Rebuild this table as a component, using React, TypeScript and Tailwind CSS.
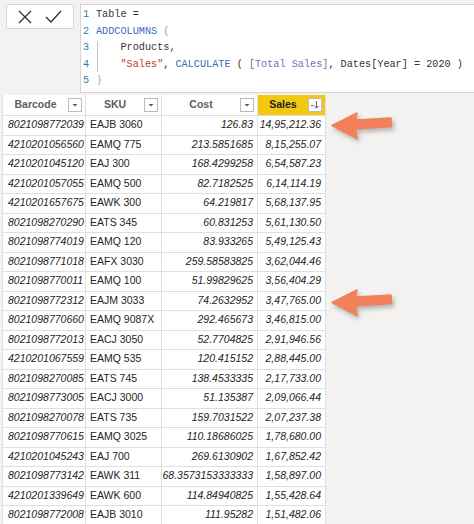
import React from "react";

const ROWS: [string, string, string, string][] = [
  ["8021098772039", "EAJB 3060", "126.83", "14,95,212.36"],
  ["4210201056560", "EAMQ 775", "213.5851685", "8,15,255.07"],
  ["4210201045120", "EAJ 300", "168.4299258", "6,54,587.23"],
  ["4210201057055", "EAMQ 500", "82.7182525", "6,14,114.19"],
  ["4210201657675", "EAWK 300", "64.219817", "5,68,137.95"],
  ["8021098270290", "EATS 345", "60.831253", "5,61,130.50"],
  ["8021098774019", "EAMQ 120", "83.933265", "5,49,125.43"],
  ["8021098771018", "EAFX 3030", "259.58583825", "3,62,044.46"],
  ["8021098770011", "EAMQ 100", "51.99829625", "3,56,404.29"],
  ["8021098772312", "EAJM 3033", "74.2632952", "3,47,765.00"],
  ["8021098770660", "EAMQ 9087X", "292.465673", "3,46,815.00"],
  ["8021098772013", "EACJ 3050", "52.7704825", "2,91,946.56"],
  ["4210201067559", "EAMQ 535", "120.415152", "2,88,445.00"],
  ["8021098270085", "EATS 745", "138.4533335", "2,17,733.00"],
  ["8021098773005", "EACJ 3000", "51.135387", "2,09,066.44"],
  ["8021098270078", "EATS 735", "159.7031522", "2,07,237.38"],
  ["8021098770615", "EAMQ 3025", "110.18686025", "1,78,680.00"],
  ["4210201045243", "EAJ 700", "269.6130902", "1,67,852.42"],
  ["8021098773142", "EAWK 311", "68.3573153333333", "1,58,897.00"],
  ["4210201339649", "EAWK 600", "114.84940825", "1,55,428.64"],
  ["8021098772008", "EAJB 3010", "111.95282", "1,51,482.06"],
];

const COLS = "grid-cols-[83px_76px_96px_68px]";

function FilterButton({ sorted }: { sorted?: boolean }) {
  return (
    <div className="flex h-[14px] w-[14px] shrink-0 items-center justify-center border border-[#bdbbb9] bg-white">
      {sorted ? (
        <svg width="10" height="10" viewBox="0 0 10 10">
          <path d="M1 5.5h2.5" stroke="#605e5c" strokeWidth="1" />
          <path d="M6.5 1v7M4.5 6l2 2.2 2-2.2" stroke="#605e5c" strokeWidth="1" fill="none" />
        </svg>
      ) : (
        <svg width="8" height="8" viewBox="0 0 8 8">
          <path d="M1.5 3h5L4 5.5z" fill="#605e5c" />
        </svg>
      )}
    </div>
  );
}

function HeaderCell({ label, sales }: { label: string; sales?: boolean }) {
  return (
    <div
      className={`flex h-[21px] items-center border-r border-b border-[#e1dfdd] pr-[3px] ${
        sales ? "bg-[#f2c811] text-[#252423]" : "bg-white text-[#605e5c]"
      }`}
    >
      <span className="flex-1 text-center font-semibold">{label}</span>
      <FilterButton sorted={sales} />
    </div>
  );
}

function Arrow({ top }: { top: number }) {
  return (
    <svg
      className="absolute left-[330px] drop-shadow-[2px_3px_2px_rgba(0,0,0,0.25)]"
      style={{ top }}
      width="66"
      height="32"
      viewBox="0 0 66 32"
    >
      <path
        d="M2 14.5 L27 2 L25.5 9 L61 7 L61.5 15.5 L25.5 18 L27 27.5 Z"
        fill="#f2805a"
        strokeLinejoin="round"
        stroke="#f2805a"
        strokeWidth="1.5"
      />
    </svg>
  );
}

const mono = { fontFamily: '"Liberation Mono", "DejaVu Sans Mono", monospace' };

export default function App() {
  return (
    <div
      className="relative h-[524px] w-[474px] overflow-hidden bg-[#f3f2f1] text-[10.5px] text-[#252423]"
      style={{ fontFamily: '"Liberation Sans", Arial, sans-serif' }}
    >
      {/* formula bar */}
      <div className="flex h-[95px] items-start gap-[6px] pl-[6px] pt-[4px]">
        <div className="flex h-[25px] w-[68px] items-center justify-center gap-[13px] rounded-[2px] border border-[#d6d4d2] bg-white">
          <svg width="14" height="14" viewBox="0 0 14 14">
            <path d="M1 1l12 12M13 1L1 13" stroke="#323130" strokeWidth="1.3" />
          </svg>
          <svg width="17" height="13" viewBox="0 0 17 13">
            <path d="M1 7l5 5L16 1" stroke="#323130" strokeWidth="1.3" fill="none" />
          </svg>
        </div>
        <div
          className="relative h-[89px] flex-1 border border-r-0 border-[#d6d4d2] bg-white pl-[2px] pt-[2px] text-[10.2px] leading-[16.5px] text-[#333]"
          style={mono}
        >
          <div className="absolute left-[16px] top-[36px] h-[31px] w-px bg-[#c8c6c4]" />
          {[
            <span>Table =</span>,
            <span>
              <span className="text-[#3a6cb5]">ADDCOLUMNS</span> <span className="text-[#9a9a9a]">(</span>
            </span>,
            <span>{"    "}Products,</span>,
            <span>
              {"    "}
              <span className="text-[#c0392b]">"Sales"</span>, <span className="text-[#3a6cb5]">CALCULATE</span> ({" "}
              <span className="text-[#8b63b6]">[Total Sales]</span>, Dates[Year] = 2020 )
            </span>,
            <span className="text-[#9a9a9a]">)</span>,
          ].map((line, i) => (
            <div key={i} className="flex whitespace-pre">
              <span className="w-[13px] text-[#2b7fa8]">{i + 1}</span>
              {line}
            </div>
          ))}
        </div>
      </div>

      {/* table */}
      <div className="ml-[2px] w-[324px] border-l border-[#e1dfdd]">
        <div className={`grid ${COLS}`}>
          <HeaderCell label="Barcode" />
          <HeaderCell label="SKU" />
          <HeaderCell label="Cost" />
          <HeaderCell label="Sales" sales />
        </div>
        {ROWS.map((r) => (
          <div key={r[0] + r[1]} className={`grid h-[19.5px] ${COLS} bg-white`}>
            <div className="flex items-center border-r border-b border-[#e1dfdd] pl-[5px] italic">{r[0]}</div>
            <div className="flex items-center border-r border-b border-[#e1dfdd] pl-[4px]">{r[1]}</div>
            <div className="flex items-center justify-end border-r border-b border-[#e1dfdd] pr-[4px] italic">
              {r[2]}
            </div>
            <div className="flex items-center justify-end border-r border-b border-[#e1dfdd] pr-[4px] italic">
              {r[3]}
            </div>
          </div>
        ))}
      </div>

      <Arrow top={111} />
      <Arrow top={288} />
    </div>
  );
}
